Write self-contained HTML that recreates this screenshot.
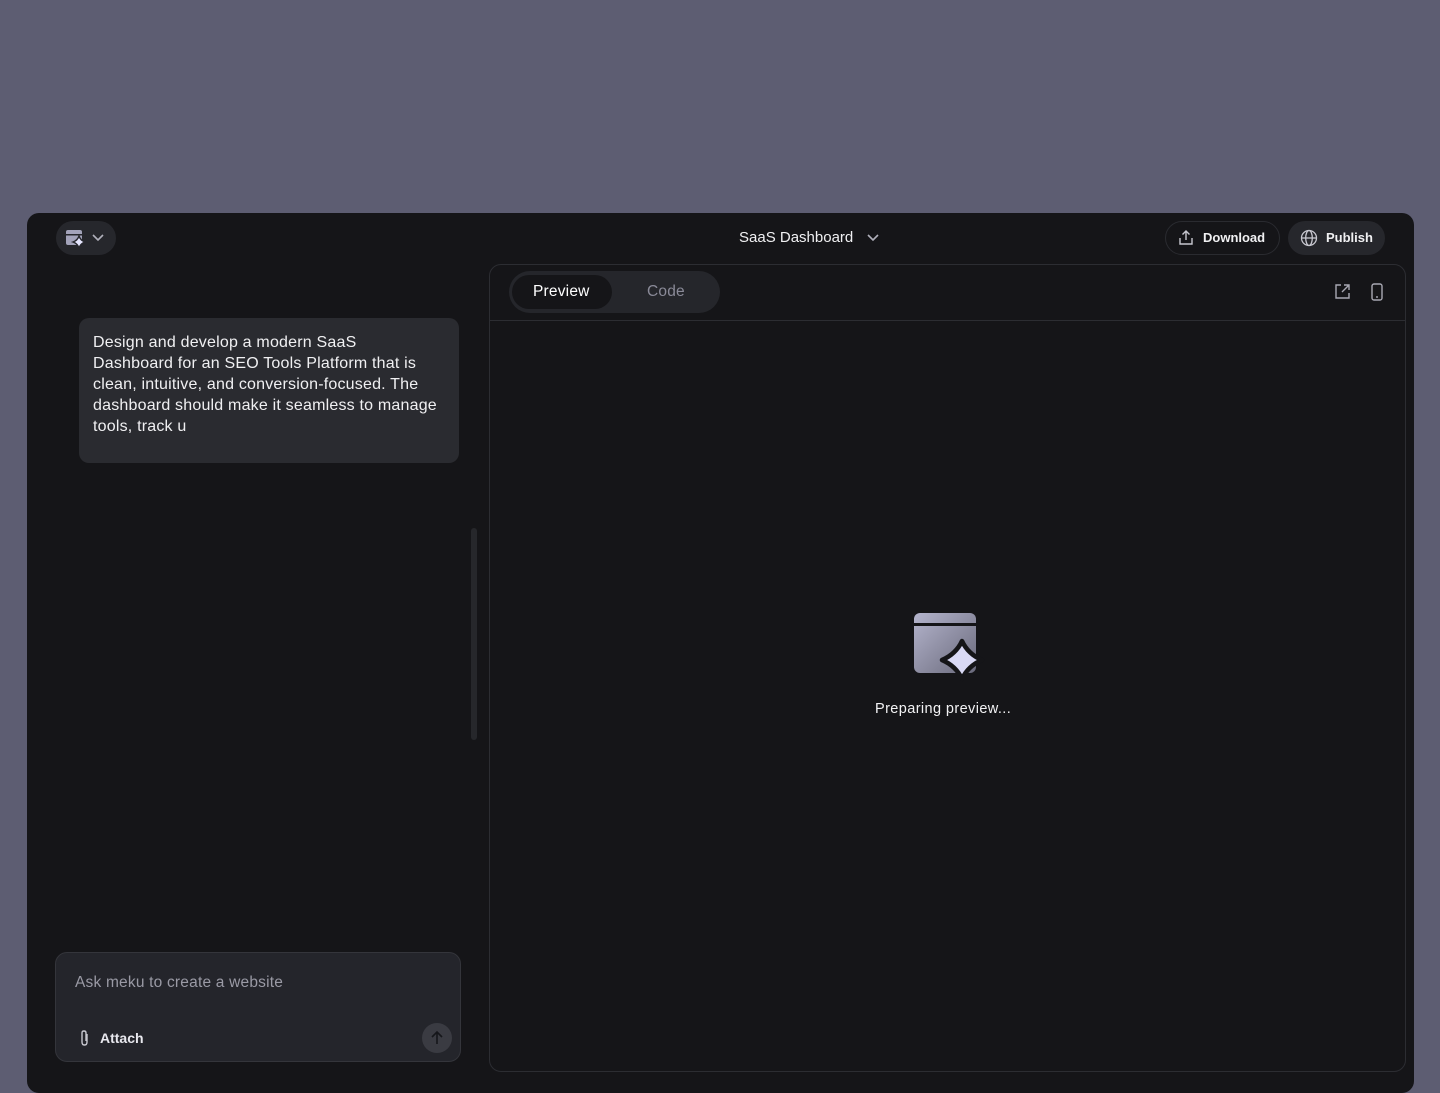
<!DOCTYPE html>
<html><head><meta charset="utf-8"><style>
*{box-sizing:border-box;margin:0;padding:0}
body{width:1440px;height:1080px;background:#5d5d72;font-family:"Liberation Sans",sans-serif;position:relative;overflow:hidden}
.win{position:absolute;left:27px;top:213px;width:1387px;height:880px;background:#151518;border-radius:12px}
.abs{position:absolute}
.pill{position:absolute;border-radius:20px}
</style></head><body>
<div class="win"></div>
<div class="pill" style="left:56px;top:221px;width:60px;height:34px;background:#26272c"></div>
<svg class="abs" style="left:65px;top:229px" width="22" height="20" viewBox="0 0 22 20">
<rect x="1" y="1" width="16" height="15" rx="2" fill="#a3a3ba"/><rect x="1" y="5" width="16" height="1.5" fill="#26272c"/>
<path d="M14 7 Q15.5 11.5 20 13 Q15.5 14.5 14 19 Q12.5 14.5 8 13 Q12.5 11.5 14 7Z" fill="#e6e6ff" stroke="#26272c" stroke-width="1.4"/></svg>
<svg class="abs" style="left:91px;top:233px" width="14" height="10"><path d="M2 2 L7 7 L12 2" stroke="#b0b0bb" stroke-width="1.6" fill="none"/></svg>
<div class="abs" style="left:739px;top:229px;color:#f0f0f2;font-size:15px">SaaS Dashboard</div>
<svg class="abs" style="left:866px;top:233px" width="14" height="10"><path d="M2 2 L7 7 L12 2" stroke="#b0b0bb" stroke-width="1.6" fill="none"/></svg>
<div class="pill" style="left:1165px;top:221px;width:115px;height:34px;border:1px solid #2a2b30"></div>
<svg class="abs" style="left:1177px;top:229px" width="18" height="18" viewBox="0 0 18 18" fill="none" stroke="#c8c8d0" stroke-width="1.4"><path d="M3 9 V15 H15 V9 M9 11 V2 M5.5 5.5 L9 2 L12.5 5.5"/></svg>
<div class="abs" style="left:1203px;top:230px;color:#f0f0f2;font-size:13px;font-weight:bold">Download</div>
<div class="pill" style="left:1288px;top:221px;width:97px;height:34px;background:#26272c"></div>
<svg class="abs" style="left:1300px;top:229px" width="18" height="18" viewBox="0 0 18 18" fill="none" stroke="#c8c8d0" stroke-width="1.3"><circle cx="9" cy="9" r="7.5"/><ellipse cx="9" cy="9" rx="3.3" ry="7.5"/><path d="M1.5 9 H16.5"/></svg>
<div class="abs" style="left:1326px;top:230px;color:#f0f0f2;font-size:13px;font-weight:bold">Publish</div>
<div class="abs" style="left:489px;top:264px;width:917px;height:808px;border:1px solid #2c2d32;border-radius:12px"></div>
<div class="abs" style="left:490px;top:320px;width:915px;height:1px;background:#2c2d32"></div>
<div class="pill" style="left:509px;top:271px;width:211px;height:42px;background:#25262b;border-radius:21px"></div>
<div class="pill" style="left:512px;top:275px;width:100px;height:34px;background:#151518;border-radius:17px"></div>
<div class="abs" style="left:533px;top:283px;color:#fff;font-size:15.5px;letter-spacing:0.2px">Preview</div>
<div class="abs" style="left:647px;top:283px;color:#8a8a98;font-size:15.5px;letter-spacing:0.2px">Code</div>
<svg class="abs" style="left:1334px;top:283px" width="17" height="17" viewBox="0 0 17 17" fill="none" stroke="#a8a8b2" stroke-width="1.4"><path d="M7 2 H2 V15 H15 V10 M10 2 H15 V7 M15 2 L8 9"/></svg>
<svg class="abs" style="left:1370px;top:283px" width="14" height="18" viewBox="0 0 14 18" fill="none" stroke="#a8a8b2" stroke-width="1.4"><rect x="2" y="1" width="10" height="16" rx="2"/><path d="M6 14 H8"/></svg>
<svg class="abs" style="left:912px;top:611px" width="76" height="76" viewBox="0 0 76 76">
<defs><linearGradient id="g" x1="0" y1="0" x2="1" y2="1"><stop offset="0" stop-color="#b4b4cc"/><stop offset="1" stop-color="#6a6a7c"/></linearGradient></defs>
<rect x="2" y="2" width="62" height="60" rx="6" fill="url(#g)"/><rect x="2" y="12" width="62" height="3" fill="#151518"/>
<path d="M50 30 Q56 43 70 49 Q56 55 50 68 Q44 55 30 49 Q44 43 50 30Z" fill="#d9d9f5" stroke="#151518" stroke-width="4.5" stroke-linejoin="round"/></svg>
<div class="abs" style="left:875px;top:701px;color:#f2f2f4;font-size:14.5px;letter-spacing:0.4px">Preparing preview...</div>
<div class="abs" style="left:79px;top:318px;width:380px;height:145px;background:#2a2b30;border-radius:10px"></div>
<div class="abs" style="left:93px;top:332px;white-space:nowrap;color:#f0f0f2;font-size:16px;letter-spacing:0.2px;line-height:21px">Design and develop a modern SaaS<br>Dashboard for an SEO Tools Platform that is<br>clean, intuitive, and conversion-focused. The<br>dashboard should make it seamless to manage<br>tools, track u</div>
<div class="abs" style="left:471px;top:528px;width:6px;height:212px;background:#26272b;border-radius:3px"></div>
<div class="abs" style="left:55px;top:952px;width:406px;height:110px;background:#24252b;border:1px solid #34353b;border-radius:12px"></div>
<div class="abs" style="left:75px;top:974px;color:#9a9aa5;font-size:15.5px;letter-spacing:0.2px">Ask meku to create a website</div>
<svg class="abs" style="left:78px;top:1029px" width="14" height="18" viewBox="0 0 14 18" fill="none" stroke="#c8c8d0" stroke-width="1.4"><path d="M9 5 V13 Q9 16 6.5 16 Q4 16 4 13 V4 Q4 2 6 2 Q8 2 8 4 V12"/></svg>
<div class="abs" style="left:100px;top:1030px;color:#e8e8ee;font-size:14px;font-weight:bold">Attach</div>
<div class="abs" style="left:422px;top:1023px;width:30px;height:30px;border-radius:50%;background:#3a3b42"></div>
<svg class="abs" style="left:429px;top:1030px" width="16" height="16" viewBox="0 0 16 16" fill="none" stroke="#15161a" stroke-width="1.6"><path d="M8 14 V2 M3 7 L8 2 L13 7"/></svg>
</body></html>
